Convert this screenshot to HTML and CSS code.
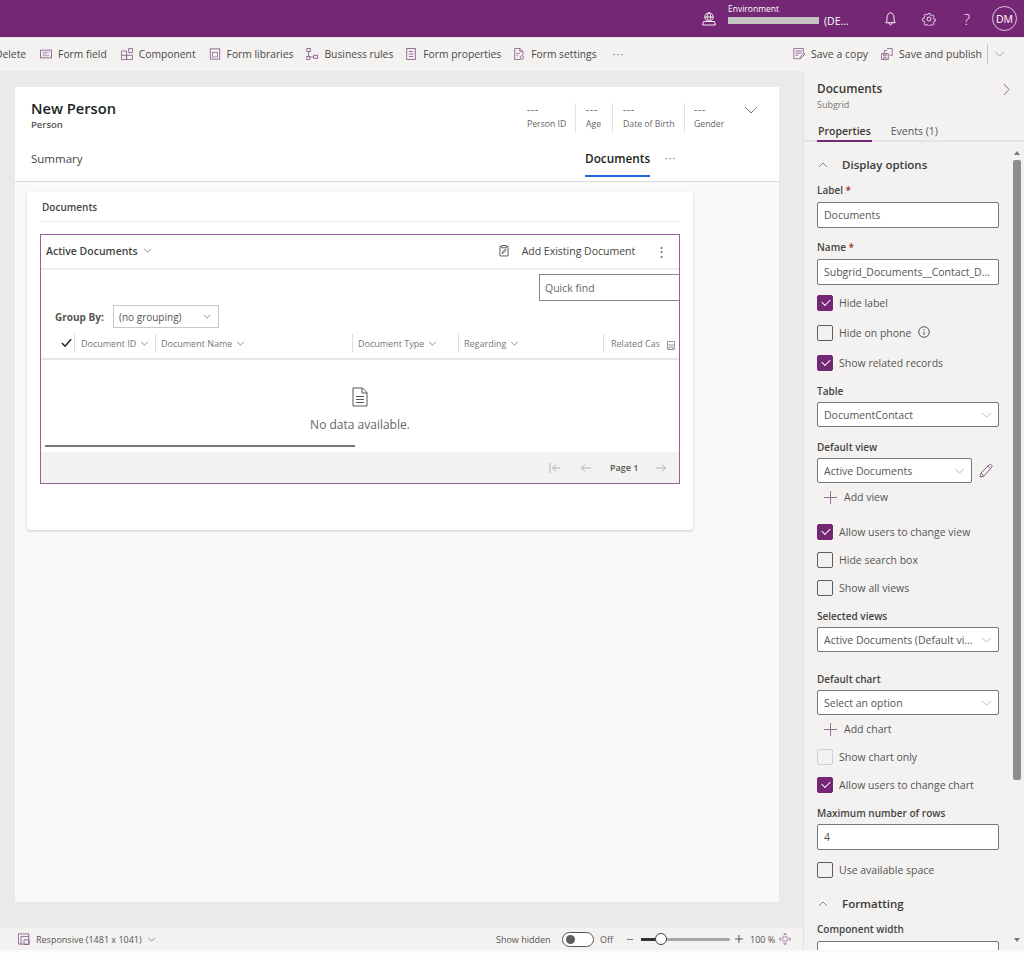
FILE: index.html
```html
<!DOCTYPE html>
<html lang="en">
<head>
<meta charset="utf-8">
<title>New Person - Form designer</title>
<link rel="stylesheet" href="styles.css">
</head>
<body>
<div class="app">
  <header class="topbar">
    <svg class="ti globe" viewBox="0 0 14 14"><circle cx="7" cy="5" r="4.2"/><path d="M2.8 5h8.4M7 .8c-2.4 2.6-2.4 5.8 0 8.4M7 .8c2.4 2.6 2.4 5.8 0 8.4M1.5 9.5h11l1 3.5H.5z"/></svg>
    <div class="env">
      <div class="env-label">Environment</div>
      <div class="env-row"><span class="env-bar"></span><span class="env-name">(DE...</span></div>
    </div>
    <svg class="ti bell" viewBox="0 0 16 16"><path d="M3 12c1-1 1.300-2.500 1.300-5.500C4.300 3.500 6 1.500 8 1.500s3.700 2 3.700 5c0 3 .3 4.500 1.300 5.500zM6.500 12c0 3 3 3 3 0"/></svg>
    <svg class="ti gear" viewBox="0 0 16 16"><circle cx="8" cy="8" r="2.300"/><path d="M6.800 1h2.400l.4 2 1.500.7 1.800-1 1.600 1.800-1.100 1.700.6 1.600 2 .5v2.400l-2 .5-.6 1.500 1.100 1.800-1.700 1.600-1.700-1.100-1.500.6-.5 1.400H6.800l-.4-1.500-1.500-.6-1.800 1.100-1.600-1.700 1.100-1.700-.6-1.500-2-.5V7.300l2-.5.6-1.600-1.100-1.700 1.700-1.700 1.700 1 1.500-.6z" transform="translate(.8 .8) scale(.9)"/></svg>
    <span class="help">?</span>
    <span class="avatar">DM</span>
  </header>

  <nav class="cmdbar">
    <span class="cmd cmd-cut">Delete</span>
    <span class="cmd cmd-wide"><svg class="ci" viewBox="0 0 14 14"><rect x=".5" y="2.500" width="13" height="9"/><path d="M3 5h8M3 7h5M3 9h8" stroke-width=".7"/></svg>Form field</span>
    <span class="cmd"><svg class="ci" viewBox="0 0 14 14"><path d="M.5 3.500h6v10h-6zM.5 8.500h13v5h-7M6.500 8.500v5M9 .5h4.500v5H9z"/></svg>Component</span>
    <span class="cmd"><svg class="ci" viewBox="0 0 14 14"><rect x="1.500" y="1" width="11" height="12"/><rect x="4" y="5" width="6" height="5.500" stroke-width=".8"/></svg>Form libraries</span>
    <span class="cmd cmd-tight"><svg class="ci" viewBox="0 0 14 14"><rect x="1" y=".5" width="4" height="3.500"/><rect x="1" y="10" width="3.500" height="3.500"/><rect x="9" y="8.500" width="4.500" height="3.500"/><path d="M3 4v6M4.500 10.500H9"/></svg>Business rules</span>
    <span class="cmd cmd-tight"><svg class="ci" viewBox="0 0 14 14"><rect x="2" y=".5" width="10" height="13"/><path d="M4.500 4h5M4.500 7h5M4.500 10h5"/></svg>Form properties</span>
    <span class="cmd"><svg class="ci" viewBox="0 0 14 14"><path d="M9 13.500H2V.5h6l3.500 3.500v4M8 .5V4h3.500M4 6.500h4M4 9h2"/><circle cx="10.500" cy="11" r="2"/></svg>Form settings</span>
    <span class="cmd-more">···</span>
    <span class="cmd-right">
      <span class="cmd"><svg class="ci" viewBox="0 0 14 14"><path d="M12 6V.5H1v12h6M3 3.500h7M3 6h7M3 8.500h3M8 13l.5-2.500L13 6l1 1-4.500 4.500z"/></svg>Save a copy</span>
      <span class="cmd"><svg class="ci" viewBox="0 0 14 14"><path d="M4 6V3h3M7 .5h6v8h-3M.5 6.500h8v7h-8zM3 6.500V9h3V6.500M3 13.500v-2.500h3v2.500"/></svg>Save and publish</span>
      <span class="cmd-div"></span>
      <svg class="chev chev-g" viewBox="0 0 12 7"><path d="M1 1l5 5 5-5"/></svg>
    </span>
  </nav>

  <div class="work">
    <div class="left">
      <main class="canvas">
        <div class="form">
          <div class="form-head">
            <div class="head-top">
              <div class="titles">
                <div class="title">New Person</div>
                <div class="subtitle">Person</div>
              </div>
              <div class="hf hf-id"><span>---</span><small>Person ID</small></div>
              <div class="hf hf-age"><span>---</span><small>Age</small></div>
              <div class="hf hf-dob"><span>---</span><small>Date of Birth</small></div>
              <div class="hf hf-gen"><span>---</span><small>Gender</small></div>
              <svg class="chev head-chev" viewBox="0 0 14 8"><path d="M1 1l6 6 6-6"/></svg>
            </div>
            <div class="tabs">
              <span class="tab-sum">Summary</span>
              <span class="tab-doc">Documents</span>
              <span class="tab-more">···</span>
            </div>
          </div>
          <div class="form-body">
            <section class="card">
              <div class="card-title">Documents</div>
              <div class="grid">
                <div class="g-tool">
                  <span class="g-view">Active Documents</span>
                  <svg class="chev g-view-chev" viewBox="0 0 10 6"><path d="M1 1l4 4 4-4"/></svg>
                  <svg class="g-add-ico" viewBox="0 0 11 13"><path d="M3 2H1v10.500h9V2H8M3 1h5v2.500H3zM3.500 10l.5-2 3-3 1 1-3 3z"/></svg>
                  <span class="g-add">Add Existing Document</span>
                  <span class="g-kebab">⋮</span>
                </div>
                <div class="g-find"><span>Quick find</span></div>
                <div class="g-group">
                  <span class="g-gl">Group By:</span>
                  <span class="g-sel">(no grouping)<svg class="chev" viewBox="0 0 10 6"><path d="M1 1l4 4 4-4"/></svg></span>
                </div>
                <div class="g-cols">
                  <span class="gc gc-0"><svg class="g-check" viewBox="0 0 12 10"><path d="M1 5l3.500 3.500L11 1"/></svg></span>
                  <span class="gc gc-1">Document ID<svg class="chev" viewBox="0 0 10 6"><path d="M1 1l4 4 4-4"/></svg></span>
                  <span class="gc gc-2">Document Name<svg class="chev" viewBox="0 0 10 6"><path d="M1 1l4 4 4-4"/></svg></span>
                  <span class="gc gc-3">Document Type<svg class="chev" viewBox="0 0 10 6"><path d="M1 1l4 4 4-4"/></svg></span>
                  <span class="gc gc-4">Regarding<svg class="chev" viewBox="0 0 10 6"><path d="M1 1l4 4 4-4"/></svg></span>
                  <span class="gc gc-5">Related Cas<svg class="g-save" viewBox="0 0 8 9"><path d="M.5.500h7v8h-7zM.5 4h7M2 8.500V6h4v2.500"/></svg></span>
                </div>
                <div class="g-empty">
                  <svg class="g-doc" viewBox="0 0 16 20"><path d="M1 1h9.500L15 5.500V19H1zM10 1v5h5M4 9.500h8M4 12.500h8M4 15.500h8"/></svg>
                  <div class="g-none">No data available.</div>
                </div>
                <div class="g-scroll"></div>
                <div class="g-foot">
                  <svg class="g-nav" viewBox="0 0 12 10"><path d="M1 0v10M11 5H3.500M7 1.500L3.500 5 7 8.500"/></svg>
                  <svg class="g-nav g-prev" viewBox="0 0 12 10"><path d="M11 5H1.500M5 1.500L1.500 5 5 8.500"/></svg>
                  <span class="g-page">Page 1</span>
                  <svg class="g-nav g-next" viewBox="0 0 12 10"><path d="M1 5h9.500M7 1.500L10.500 5 7 8.500"/></svg>
                </div>
              </div>
            </section>
          </div>
        </div>
      </main>
      <footer class="status">
        <svg class="ci st-ico" viewBox="0 0 14 14"><path d="M.5 1h12v12H.5zM3.500 13V4h9M7 8h6v5.500H7z"/></svg>
        <span class="st-res">Responsive (1481 x 1041)</span>
        <svg class="chev st-chev" viewBox="0 0 10 6"><path d="M1 1l4 4 4-4"/></svg>
        <span class="st-hidden">Show hidden</span>
        <span class="toggle"><i></i></span>
        <span class="st-off">Off</span>
        <span class="st-minus"></span>
        <span class="slider"><i></i><b></b></span>
        <svg class="st-plus" viewBox="0 0 8 8"><path d="M4 0v8M0 4h8"/></svg>
        <span class="st-zoom">100 %</span>
        <svg class="ci st-fit" viewBox="0 0 14 14"><rect x="4.500" y="4.500" width="5" height="5"/><path d="M7 0l-1.500 2h3zM7 14l-1.500-2h3zM0 7l2-1.500v3zM14 7l-2-1.500v3z"/></svg>
      </footer>
    </div>

    <aside class="panel">
      <div class="p-head">
        <div class="p-titles">
          <div class="p-title">Documents</div>
          <div class="p-sub">Subgrid</div>
        </div>
        <svg class="p-close" viewBox="0 0 7 13"><path d="M1 1l5 5.500L1 12"/></svg>
      </div>
      <div class="p-tabs"><span class="p-tab on">Properties</span><span class="p-tab">Events (1)</span></div>
      <div class="p-body">
        <div class="scrollbar"><i class="sb-up"></i><b></b><i class="sb-down"></i></div>
        <div class="sec s1"><svg class="sec-chev" viewBox="0 0 10 6"><path d="M1 5l4-4 4 4"/></svg>Display options</div>
        <div class="lab m8">Label <em>*</em></div>
        <div class="inp m5 tall">Documents</div>
        <div class="lab m12">Name <em>*</em></div>
        <div class="inp m5 tall">Subgrid_Documents__Contact_D...</div>
        <label class="chk m10"><i class="box on"></i>Hide label</label>
        <label class="chk m14"><i class="box"></i>Hide on phone<svg class="info" viewBox="0 0 12 12"><circle cx="6" cy="6" r="5.300"/><path d="M6 5.500V9M6 3v1.200"/></svg></label>
        <label class="chk m14"><i class="box on"></i>Show related records</label>
        <div class="lab m13">Table</div>
        <div class="inp sel m4">DocumentContact<svg class="chev" viewBox="0 0 12 7"><path d="M1 1l5 5 5-5"/></svg></div>
        <div class="lab m13">Default view</div>
        <div class="view-row m4">
          <div class="inp sel short">Active Documents<svg class="chev" viewBox="0 0 12 7"><path d="M1 1l5 5 5-5"/></svg></div>
          <svg class="pencil" viewBox="0 0 14 14"><path d="M1 13l1-4L10 1c1-.8 2-.6 2.500 0s.8 1.500 0 2.500L5 12zM2 9l3 3M9 2l3 3"/></svg>
        </div>
        <div class="add m6"><svg viewBox="0 0 14 14"><path d="M7 0v14M0 7h14"/></svg>Add view</div>
        <label class="chk m19"><i class="box on"></i>Allow users to change view</label>
        <label class="chk m12"><i class="box"></i>Hide search box</label>
        <label class="chk m12"><i class="box"></i>Show all views</label>
        <div class="lab m13">Selected views</div>
        <div class="inp sel m4">Active Documents (Default vi...<svg class="chev" viewBox="0 0 12 7"><path d="M1 1l5 5 5-5"/></svg></div>
        <div class="lab m20">Default chart</div>
        <div class="inp sel m4">Select an option<svg class="chev" viewBox="0 0 12 7"><path d="M1 1l5 5 5-5"/></svg></div>
        <div class="add m6"><svg viewBox="0 0 14 14"><path d="M7 0v14M0 7h14"/></svg>Add chart</div>
        <label class="chk m12"><i class="box off"></i>Show chart only</label>
        <label class="chk m12"><i class="box on"></i>Allow users to change chart</label>
        <div class="lab m13">Maximum number of rows</div>
        <div class="inp m4 tall">4</div>
        <label class="chk m12"><i class="box"></i>Use available space</label>
        <div class="sec s2"><svg class="sec-chev" viewBox="0 0 10 6"><path d="M1 5l4-4 4 4"/></svg>Formatting</div>
        <div class="lab m8">Component width</div>
        <div class="inp m5"></div>
      </div>
    </aside>
  </div>
</div>
</body>
</html>
```
FILE: styles.css
```css
* { box-sizing: border-box; }
html, body { margin: 0; padding: 0; }
body { font-family: "Open Sans", "Noto Sans", sans-serif; font-size: 10.500px; color: #323130; background: #fafafa; }
svg { display: block; fill: none; stroke: currentColor; stroke-width: 1; flex: none; }
.app { width: 1024px; height: 953px; display: flex; flex-direction: column; overflow: hidden; padding-bottom: 3px; }

/* top bar */
.topbar { height: 37px; flex: none; background: #742774; color: #fff; display: flex; align-items: center; }
.ti { width: 15px; height: 15px; color: #fff; }
.globe { margin-left: 702px; width: 14px; height: 14px; color: #eee; }
.env { margin-left: 12px; width: 112px; flex: none; align-self: flex-start; padding-top: 3px; }
.env-label { font-size: 8.500px; line-height: 11px; }
.env-row { display: flex; align-items: center; height: 13px; font-size: 10.500px; white-space: nowrap; }
.env-bar { width: 91px; flex: none; height: 7px; background: #c4c4c4; margin-right: 5px; }
.bell { margin-left: 43px; width: 15px; height: 16px; }
.gear { margin-left: 24px; width: 14px; height: 14px; }
.help { margin-left: 21px; width: 20px; text-align: center; font-size: 15px; font-weight: 300; }
.avatar { margin-left: 15px; flex: none; width: 25px; height: 25px; border: 1px solid #ddc8dd; border-radius: 50%; font-size: 10.500px; display: flex; align-items: center; justify-content: center; }

/* command bar */
.cmdbar { height: 34px; flex: none; background: #f3f2f1; display: flex; align-items: center; padding-bottom: 2px; border-top: 1px solid #e8e4e8; color: #4a4846; }
.cmd { display: flex; align-items: center; white-space: nowrap; font-size: 10.300px; margin-right: 13px; }
.cmd-cut { margin-left: -5px; margin-right: 14px; }
.cmd-wide { margin-right: 14px; }
.cmd-tight { margin-right: 12px; }
.ci { width: 12px; height: 12px; color: #8a5a8a; margin-right: 6px; }
.cmd-more { color: #777; letter-spacing: 1px; font-size: 11px; margin-left: 3px; }
.cmd-right { margin-left: auto; display: flex; align-items: center; }
.cmd-right .cmd { font-size: 10.500px; }
.cmd-right .cmd:nth-child(2) { margin-right: 5px; }
.cmd-div { width: 1px; height: 20px; background: #c8c6c4; }
.chev { color: #777; }
.chev-g { width: 11px; height: 6px; margin: 0 19px 0 6px; color: #999; }

/* work area */
.work { flex: 1; min-height: 0; display: flex; }
.left { width: 804px; flex: none; display: flex; flex-direction: column; border-right: 1px solid #e2e0de; }
.canvas { flex: 1; min-height: 0; background: #eaeaea; padding: 16px 24px 0 15px; }
.form { height: 815px; background: #faf9f8; display: flex; flex-direction: column; }
.form-head { height: 95px; flex: none; background: #fff; border-bottom: 1px solid #d8d8d8; padding-left: 16px; }
.head-top { height: 56px; display: flex; align-items: flex-start; position: relative; }
.titles { flex: 1; padding-top: 11px; }
.title { font-size: 14.700px; line-height: 20px; font-weight: 600; color: #201f1e; }
.subtitle { font-size: 9.500px; line-height: 13px; font-weight: 600; color: #555; }
.hf { height: 30px; margin-top: 16px; display: flex; flex-direction: column; font-size: 9.500px; color: #666; border-right: 1px solid #e3e1df; white-space: nowrap; }
.hf span { line-height: 12px; font-weight: 600; margin-top: 1px; letter-spacing: 1px; }
.hf small { font-size: 8.700px; line-height: 12px; margin-top: 2px; }
.hf-id { width: 49px; }
.hf-age { width: 37px; padding-left: 10px; }
.hf-dob { width: 72px; padding-left: 10px; }
.hf-gen { width: 50px; padding-left: 9px; border-right: 0; }
.head-chev { width: 14px; height: 8px; margin: 19px 21px 0 9px; }
.tabs { height: 38px; display: flex; align-items: flex-start; }
.tab-sum { font-size: 11.500px; line-height: 32px; flex: none; width: 554px; color: #444; }
.tab-doc { font-size: 11.800px; font-weight: 600; line-height: 30px; height: 34px; border-bottom: 2px solid #2266e3; color: #201f1e; width: 65px; white-space: nowrap; }
.tab-more { margin-left: 15px; letter-spacing: 1px; line-height: 30px; color: #666; }
.form-body { flex: 1; padding: 10px 0 0 12px; }
.card { width: 666px; height: 338px; background: #fff; border-radius: 3px; box-shadow: 0 1px 3px rgba(0,0,0,.18); padding: 0 13px; }
.card-title { height: 30px; padding: 8px 2px 0; font-size: 10px; font-weight: 600; color: #444; border-bottom: 1px solid #ececec; line-height: 14px; }
.grid { margin-top: 12px; height: 250px; border: 1px solid #9a5c9a; display: flex; flex-direction: column; overflow: hidden; }
.g-tool { height: 35px; flex: none; border-bottom: 2px solid #eee; display: flex; align-items: center; padding: 0 0 2px 5px; }
.g-view { font-weight: 600; font-size: 10.500px; color: #444; white-space: nowrap; }
.g-view-chev { width: 9px; height: 5px; margin-left: 5px; }
.g-add-ico { width: 10px; height: 13px; margin-left: 347px; color: #555; }
.g-add { margin-left: 13px; font-size: 10.500px; color: #444; white-space: nowrap; }
.g-kebab { margin-left: 20px; font-size: 13px; color: #666; }
.g-find { flex: none; align-self: flex-end; width: 140px; height: 27px; margin: 4px 0 0; border: 1px solid #888; border-right: 0; padding: 0 5px; line-height: 27px; color: #666; font-size: 10.500px; }
.g-group { flex: none; height: 23px; margin: 4px 0 0 14px; display: flex; align-items: center; }
.g-gl { width: 58px; font-weight: 700; color: #555; font-size: 10px; white-space: nowrap; }
.g-sel { width: 106px; height: 23px; border: 1px solid #c8c8c8; display: flex; align-items: center; justify-content: space-between; padding: 0 7px 0 5px; color: #555; font-size: 10px; white-space: nowrap; }
.g-sel .chev { width: 8px; height: 5px; }
.g-cols { flex: none; height: 31px; margin-top: 1px; display: flex; align-items: center; border-bottom: 2px solid #e6e6e6; color: #777; font-size: 9px; white-space: nowrap; padding-bottom: 1px; }
.gc { height: 18px; display: flex; align-items: center; flex: none; padding-left: 6px; }
.gc .chev { width: 9px; height: 5px; margin-left: 4px; }
.gc + .gc { border-left: 1px solid #ddd; }
.gc-0 { width: 33px; padding-left: 20px; }
.g-check { width: 11px; height: 10px; color: #222; stroke-width: 1.700; }
.gc-1 { width: 81px; }
.gc-2 { width: 197px; padding-left: 5px; }
.gc-3 { width: 106px; padding-left: 5px; }
.gc-4 { width: 145px; padding-left: 5px; }
.gc-5 { width: 80px; padding-left: 7px; }
.g-save { width: 8px; height: 9px; margin-left: 7px; margin-top: 4px; color: #999; }
.g-empty { flex: none; height: 85px; display: flex; flex-direction: column; align-items: center; padding-top: 27px; }
.g-doc { width: 16px; height: 20px; color: #555; }
.g-none { margin-top: 10px; font-size: 12px; color: #666; line-height: 16px; }
.g-scroll { flex: none; width: 310px; height: 2px; margin-left: 4px; background: #777; }
.g-foot { flex: 1; margin-top: 5px; background: #f3f2f1; display: flex; align-items: center; padding-left: 508px; }
.g-nav { width: 12px; height: 10px; color: #b5b3b1; }
.g-prev { margin-left: 19px; }
.g-page { margin-left: 18px; font-size: 9px; font-weight: 600; color: #555; white-space: nowrap; }
.g-next { margin-left: 17px; }

/* properties panel */
.panel { flex: 1; min-width: 0; background: #f3f2f1; display: flex; flex-direction: column; }
.p-head { height: 42px; flex: none; display: flex; padding: 9px 13px 0 13px; justify-content: space-between; }
.p-title { font-size: 11.800px; font-weight: 600; line-height: 16px; color: #3b3a39; }
.p-sub { font-size: 9px; line-height: 13px; margin-top: 2px; color: #777; }
.p-close { width: 7px; height: 13px; margin-top: 3px; color: #8a6a8a; margin-right: 1px; }
.p-tabs { height: 29px; flex: none; display: flex; padding-left: 13px; border-bottom: 2px solid #e6e4e2; }
.p-tab { font-size: 10.500px; line-height: 19px; margin-right: 18px; color: #555; height: 27px; white-space: nowrap; padding: 9px 1px 0; }
.p-tab.on { font-weight: 600; color: #3b3a39; border-bottom: 2px solid #742774; height: 29px; }
.p-body { flex: 1; min-height: 0; position: relative; overflow: hidden; padding: 0 25px 0 13px; }
.scrollbar { position: absolute; top: 2px; right: 2px; width: 9px; bottom: 0; display: flex; flex-direction: column; }
.scrollbar b { display: block; width: 8px; height: 620px; margin-top: 16px; background: #8d8d8d; border-radius: 2px; }
.sb-up { position: absolute; top: 7px; left: 1px; border: 3px solid transparent; border-bottom: 4px solid #777; border-top: 0; }
.sb-down { position: absolute; bottom: 8px; left: 1px; border: 3px solid transparent; border-top: 4px solid #777; border-bottom: 0; }
.sec { height: 21px; display: flex; align-items: center; font-size: 11.500px; font-weight: 600; color: #3b3a39; white-space: nowrap; }
.s1 { margin-top: 12px; }
.s2 { margin-top: 15px; }
.sec-chev { width: 10px; height: 6px; margin: 0 14px 0 1px; color: #888; }
.lab { height: 14px; line-height: 14px; font-size: 10px; font-weight: 600; color: #444; white-space: nowrap; }
.lab em { color: #a4262c; font-style: normal; }
.inp { height: 25px; width: 182px; flex: none; background: #fff; border: 1px solid #777; border-radius: 2px; padding: 0 6px; display: flex; align-items: center; justify-content: space-between; color: #555; font-size: 10.500px; white-space: nowrap; overflow: hidden; }
.tall { height: 26px; }
.short { width: 155px; }
.sel .chev { width: 11px; height: 6px; color: #aaa; }
.view-row { display: flex; align-items: center; }
.pencil { width: 14px; height: 14px; margin-left: 7px; color: #8a5a8a; }
.add { height: 16px; padding-left: 7px; display: flex; align-items: center; color: #555; font-size: 10.500px; }
.add svg { width: 13px; height: 13px; margin-right: 7px; color: #8a6a8a; }
.chk { height: 16px; display: flex; align-items: center; color: #555; font-size: 10.500px; white-space: nowrap; }
.box { width: 16px; height: 16px; flex: none; border: 1px solid #605e5c; border-radius: 2px; margin-right: 6px; position: relative; }
.box.on { background: #742774; border-color: #742774; }
.box.on::after { content: ""; position: absolute; left: 4px; top: 3px; width: 7px; height: 4px; border-left: 1px solid #fff; border-bottom: 1px solid #fff; transform: rotate(-45deg); }
.box.off { border-color: #d2d0ce; }
.info { width: 12px; height: 12px; margin-left: 7px; margin-top: -2px; color: #555; }
.m4 { margin-top: 4px; } .m5 { margin-top: 5px; } .m6 { margin-top: 6px; } .m8 { margin-top: 8px; }
.m10 { margin-top: 10px; } .m12 { margin-top: 12px; } .m13 { margin-top: 13px; } .m14 { margin-top: 14px; }
.m19 { margin-top: 19px; } .m20 { margin-top: 20px; }

/* status bar */
.status { height: 22px; flex: none; background: #f3f2f1; display: flex; align-items: center; font-size: 9px; color: #555; }
.st-ico { margin: 0 6px 0 18px; }
.st-res { width: 111px; white-space: nowrap; }
.st-chev { width: 9px; height: 5px; }
.st-hidden { margin-left: 340px; white-space: nowrap; width: 66px; }
.toggle { width: 32px; height: 15px; border: 1px solid #555; border-radius: 8px; background: #fff; display: flex; align-items: center; padding-left: 3px; }
.toggle i { width: 9px; height: 9px; border-radius: 50%; background: #605e5c; }
.st-off { margin-left: 6px; width: 27px; }
.st-minus { width: 6px; height: 1px; background: #777; }
.slider { margin-left: 8px; width: 89px; height: 14px; position: relative; display: block; }
.slider::before { content: ""; position: absolute; left: 0; right: 0; top: 6px; height: 3px; background: #a8a6a4; border-radius: 2px; }
.slider i { position: absolute; left: 0; top: 6px; width: 16px; height: 3px; background: #333; }
.slider b { position: absolute; left: 14px; top: 1px; width: 12px; height: 12px; border: 1px solid #444; background: #fff; border-radius: 50%; }
.st-plus { width: 8px; height: 8px; margin-left: 5px; }
.st-zoom { margin-left: 7px; width: 29px; white-space: nowrap; }
.st-fit { color: #a87fa8; margin: 0; }
```
